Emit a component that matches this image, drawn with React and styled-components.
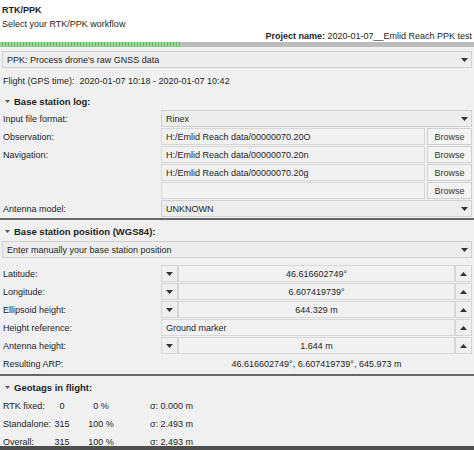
import React from 'react';
import styled, { createGlobalStyle } from 'styled-components';

const GlobalStyle = createGlobalStyle`
  html, body {
    margin: 0;
    padding: 0;
    background: #f0f0f0;
  }
`;

const Page = styled.div`
  width: 474px;
  height: 450px;
  overflow: hidden;
  background: #f0f0f0;
  font-family: "Liberation Sans", Arial, sans-serif;
  font-size: 9px;
  color: #1e1e1e;
  display: flex;
  flex-direction: column;
`;

const Header = styled.div`
  height: 42px;
  box-sizing: border-box;
  background: #fff;
  padding: 3px 2px 0 2px;
  display: flex;
  flex-direction: column;
  flex-shrink: 0;
`;

const Title = styled.div`
  font-weight: bold;
  line-height: 14px;
`;

const Subtitle = styled.div`
  line-height: 14px;
`;

const ProjectLine = styled.div`
  line-height: 11px;
  text-align: right;
  b {
    font-weight: bold;
  }
`;

const Progress = styled.div`
  height: 5px;
  background: #bcbcbc;
  display: flex;
  flex-shrink: 0;
`;

const ProgressFill = styled.div`
  height: 100%;
  background: repeating-linear-gradient(90deg, #95d595 0 2px, #6abb6a 2px 3px);
`;

const Main = styled.div`
  padding: ${p => p.$top || 0}px 2px 0 2px;
  display: flex;
  flex-direction: column;
  flex-shrink: 0;
`;

const Combo = styled.div`
  height: 17px;
  flex-shrink: 0;
  box-sizing: border-box;
  border: 1px solid #d2d2d2;
  background: #ededed;
  display: flex;
  align-items: center;
  justify-content: space-between;
  padding: 0 3px 0 4px;
`;

const Line = styled.div`
  height: 18px;
  display: flex;
  align-items: center;
  padding-left: 1px;
  margin-top: ${p => p.$top || 0}px;
`;

const SectionTitle = styled.div`
  height: ${p => p.$h || 18}px;
  box-sizing: border-box;
  padding-top: ${p => p.$pt || 0}px;
  display: flex;
  align-items: center;
  gap: 4px;
  padding-left: 3px;
  font-weight: bold;
  font-size: 9.5px;
`;

const Separator = styled.div`
  height: 2px;
  background: #666;
  flex-shrink: 0;
`;

const FormRow = styled.div`
  display: grid;
  grid-template-columns: 159px 1fr;
  align-items: center;
  height: ${p => p.$h || 17}px;
  margin-bottom: 1px;
  margin-top: ${p => p.$top || 0}px;
`;

const Label = styled.div`
  padding-left: 1px;
`;

const Field = styled.div`
  height: 17px;
  box-sizing: border-box;
  border: 1px solid #d8d8d8;
  background: #f1f1f1;
  display: flex;
  align-items: center;
  justify-content: ${p => (p.$center ? 'center' : 'flex-start')};
  padding: 0 4px;
  min-width: 0;
`;

const FileGroup = styled.div`
  display: grid;
  grid-template-columns: 1fr 45px;
  gap: 2px;
`;

const Button = styled.div`
  height: 17px;
  box-sizing: border-box;
  border: 1px solid #d0d0d0;
  background: #f3f3f3;
  display: flex;
  align-items: center;
  justify-content: center;
  color: #333;
`;

const SpinGroup = styled.div`
  display: grid;
  grid-template-columns: ${p => (p.$noDown ? '1fr 17px' : '17px 1fr 17px')};
`;

const SpinButton = styled.div`
  height: 17px;
  box-sizing: border-box;
  border: 1px solid #d6d6d6;
  background: #efefef;
  display: flex;
  align-items: center;
  justify-content: center;
`;

const ValueText = styled.div`
  text-align: center;
`;

const StatsGrid = styled.div`
  display: grid;
  grid-template-columns: 49px 20px 58px 1fr;
  grid-template-rows: 18px 18px 13px;
  align-items: start;
  line-height: 18px;
  padding-left: 1px;
`;

const StatCell = styled.div`
  text-align: ${p => (p.$center ? 'center' : 'left')};
  padding-left: ${p => p.$pad || 0}px;
  white-space: nowrap;
`;

const FooterBar = styled.div`
  height: 4px;
  background: #4f4f4f;
  flex-shrink: 0;
`;

const Arrow = ({ up }) => (
  <svg width="7" height="4" viewBox="0 0 7 4">
    <path d={up ? 'M0 4 L3.5 0 L7 4 Z' : 'M0 0 L7 0 L3.5 4 Z'} fill="#333" />
  </svg>
);

const Caret = () => (
  <svg width="5" height="3" viewBox="0 0 5 3">
    <path d="M0 0 L5 0 L2.5 3 Z" fill="#555" />
  </svg>
);

const SpinBox = ({ value }) => (
  <SpinGroup>
    <SpinButton><Arrow /></SpinButton>
    <Field $center>{value}</Field>
    <SpinButton><Arrow up /></SpinButton>
  </SpinGroup>
);

const files = [
  { label: 'Observation:', path: 'H:/Emlid Reach data/00000070.20O' },
  { label: 'Navigation:', path: 'H:/Emlid Reach data/00000070.20n' },
  { label: '', path: 'H:/Emlid Reach data/00000070.20g' },
  { label: '', path: '' },
];

const stats = [
  ['RTK fixed:', '0', '0 %', 'σ: 0.000 m'],
  ['Standalone:', '315', '100 %', 'σ: 2.493 m'],
  ['Overall:', '315', '100 %', 'σ: 2.493 m'],
];

export default function App() {
  return (
    <Page>
      <GlobalStyle />
      <Header>
        <Title>RTK/PPK</Title>
        <Subtitle>Select your RTK/PPK workflow</Subtitle>
        <ProjectLine>
          <b>Project name:</b> 2020-01-07__Emlid Reach PPK test
        </ProjectLine>
      </Header>
      <Progress>
        <ProgressFill style={{ width: '38%' }} />
      </Progress>
      <Main $top={4}>
        <Combo>
          <span>PPK: Process drone's raw GNSS data</span>
          <Arrow />
        </Combo>
        <Line $top={4}>Flight (GPS time):&nbsp; 2020-01-07 10:18 - 2020-01-07 10:42</Line>

        <SectionTitle $h={20} $pt={3}>
          <Caret />
          <span>Base station log:</span>
        </SectionTitle>
        <FormRow>
          <Label>Input file format:</Label>
          <Combo>
            <span>Rinex</span>
            <Arrow />
          </Combo>
        </FormRow>
        {files.map((f, i) => (
          <FormRow key={i}>
            <Label>{f.label}</Label>
            <FileGroup>
              <Field>{f.path}</Field>
              <Button>Browse</Button>
            </FileGroup>
          </FormRow>
        ))}
        <FormRow>
          <Label>Antenna model:</Label>
          <Combo>
            <span>UNKNOWN</span>
            <Arrow />
          </Combo>
        </FormRow>
      </Main>
      <Separator />
      <Main>
        <SectionTitle $h={21} $pt={1}>
          <Caret />
          <span>Base station position (WGS84):</span>
        </SectionTitle>
        <Combo>
          <span>Enter manually your base station position</span>
          <Arrow />
        </Combo>
        <FormRow $top={7}>
          <Label>Latitude:</Label>
          <SpinBox value="46.616602749°" />
        </FormRow>
        <FormRow>
          <Label>Longitude:</Label>
          <SpinBox value="6.607419739°" />
        </FormRow>
        <FormRow>
          <Label>Ellipsoid height:</Label>
          <SpinBox value="644.329 m" />
        </FormRow>
        <FormRow>
          <Label>Height reference:</Label>
          <SpinGroup $noDown>
            <Field>Ground marker</Field>
            <SpinButton><Arrow up /></SpinButton>
          </SpinGroup>
        </FormRow>
        <FormRow>
          <Label>Antenna height:</Label>
          <SpinBox value="1.644 m" />
        </FormRow>
        <FormRow $h={18}>
          <Label>Resulting ARP:</Label>
          <ValueText>46.616602749°, 6.607419739°, 645.973 m</ValueText>
        </FormRow>
      </Main>
      <Separator />
      <Main>
        <SectionTitle $h={21} $pt={1}>
          <Caret />
          <span>Geotags in flight:</span>
        </SectionTitle>
        <StatsGrid>
          {stats.map(row => (
            <React.Fragment key={row[0]}>
              <StatCell>{row[0]}</StatCell>
              <StatCell $center>{row[1]}</StatCell>
              <StatCell $center>{row[2]}</StatCell>
              <StatCell $pad={20}>{row[3]}</StatCell>
            </React.Fragment>
          ))}
        </StatsGrid>
      </Main>
      <FooterBar />
    </Page>
  );
}
